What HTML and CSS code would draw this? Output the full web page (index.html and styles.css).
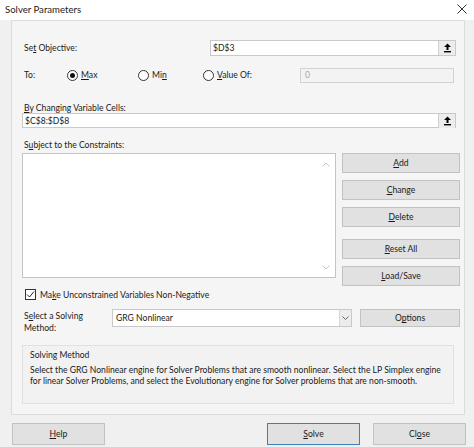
FILE: index.html
```html
<!DOCTYPE html>
<html lang="en">
<head>
    <meta charset="UTF-8">
    <meta name="viewport" content="width=device-width, initial-scale=1.0">
    <title>Solver Parameters</title>
    <link rel="stylesheet" href="styles.css">
</head>
<body>
    <div class="window">
        <div class="titlebar">
            <span class="title">Solver Parameters</span>
            <svg class="close" width="10" height="10" viewBox="0 0 10 10">
                <path d="M0.5 0.5 L9.5 9.5 M9.5 0.5 L0.5 9.5" stroke="#333" stroke-width="1" fill="none"/>
            </svg>
        </div>

        <div class="panel">
            <div class="row objective">
                <label class="lbl obj-lbl">Se<u>t</u> Objective:</label>
                <div class="refbox obj-box">
                    <span class="val">$D$3</span>
                    <span class="refbtn">
                        <svg width="9" height="10" viewBox="0 0 9 10">
                            <path d="M4.5 0.5 L8 4 L5.5 4 L5.5 7 L3.5 7 L3.5 4 L1 4 Z" fill="#000"/>
                            <rect x="1" y="8" width="7" height="1.4" fill="#000"/>
                        </svg>
                    </span>
                </div>
            </div>

            <div class="row to">
                <span class="lbl to-lbl">To:</span>
                <span class="radio-item r-max"><span class="radio checked"></span><span><u>M</u>ax</span></span>
                <span class="radio-item r-min"><span class="radio"></span><span>Mi<u>n</u></span></span>
                <span class="radio-item r-val"><span class="radio"></span><span><u>V</u>alue Of:</span></span>
                <div class="valbox">0</div>
            </div>

            <label class="lbl by-lbl"><u>B</u>y Changing Variable Cells:</label>
            <div class="refbox cells-box">
                <span class="val">$C$8:$D$8</span>
                <span class="refbtn">
                    <svg width="9" height="10" viewBox="0 0 9 10">
                        <path d="M4.5 0.5 L8 4 L5.5 4 L5.5 7 L3.5 7 L3.5 4 L1 4 Z" fill="#000"/>
                        <rect x="1" y="8" width="7" height="1.4" fill="#000"/>
                    </svg>
                </span>
            </div>

            <label class="lbl sub-lbl">S<u>u</u>bject to the Constraints:</label>
            <div class="row constraints">
                <div class="listbox">
                    <svg class="scroll-up" width="8" height="5" viewBox="0 0 8 5">
                        <path d="M0.5 4.5 L4 1 L7.5 4.5" stroke="#c4c4c4" fill="none"/>
                    </svg>
                    <svg class="scroll-down" width="8" height="5" viewBox="0 0 8 5">
                        <path d="M0.5 0.5 L4 4 L7.5 0.5" stroke="#c4c4c4" fill="none"/>
                    </svg>
                </div>
                <div class="side-buttons">
                    <button class="btn"><u>A</u>dd</button>
                    <button class="btn"><u>C</u>hange</button>
                    <button class="btn"><u>D</u>elete</button>
                    <button class="btn reset"><u>R</u>eset All</button>
                    <button class="btn"><u>L</u>oad/Save</button>
                </div>
            </div>

            <div class="row check-row">
                <span class="checkbox">
                    <svg width="9" height="9" viewBox="0 0 9 9">
                        <path d="M1 4.5 L3.5 7 L8 1.5" stroke="#222" stroke-width="1" fill="none"/>
                    </svg>
                </span>
                <span class="check-lbl">Ma<u>k</u>e Unconstrained Variables Non-Negative</span>
            </div>

            <div class="row method">
                <label class="lbl method-lbl">S<u>e</u>lect a Solving<br>Method:</label>
                <div class="select">
                    <span class="val">GRG Nonlinear</span>
                    <span class="select-arrow">
                        <svg width="7" height="4" viewBox="0 0 7 4">
                            <path d="M0.5 0.5 L3.5 3.5 L6.5 0.5" stroke="#666" fill="none"/>
                        </svg>
                    </span>
                </div>
                <button class="btn options">O<u>p</u>tions</button>
            </div>

            <div class="method-box">
                <div class="method-title">Solving Method</div>
                <p class="method-desc">Select the GRG Nonlinear engine for Solver Problems that are smooth nonlinear. Select the LP Simplex engine for linear Solver Problems, and select the Evolutionary engine for Solver problems that are non-smooth.</p>
            </div>
        </div>

        <div class="footer">
            <button class="btn foot-btn"><u>H</u>elp</button>
            <span class="spacer"></span>
            <button class="btn foot-btn solve"><u>S</u>olve</button>
            <button class="btn foot-btn">Cl<u>o</u>se</button>
        </div>
    </div>
</body>
</html>
```

FILE: styles.css
```css
* {
    box-sizing: border-box;
    margin: 0;
    padding: 0;
}

body {
    width: 474px;
    height: 447px;
    background-color: #f0f0f0;
    font-family: Lato, 'Noto Sans', sans-serif;
    font-size: 8.6px;
    color: #1a1a1a;
    overflow: hidden;
}

u {
    text-decoration: underline;
    text-underline-offset: 1px;
}

.titlebar {
    height: 20px;
    background: #ffffff;
    display: flex;
    align-items: center;
    justify-content: space-between;
    padding: 0 7px 2px 5px;
}

.title {
    font-size: 9.6px;
    color: #222;
}

.panel {
    margin: 0 9px 0 11px;
    height: 395px;
    border: 1px solid #dcdcdc;
    background: #f5f5f5;
    padding: 19px 4px 0 10px;
}

.row {
    display: flex;
    align-items: center;
}

.lbl {
    display: block;
    padding-left: 2px;
}

/* objective */
.objective {
    height: 16px;
}

.obj-lbl {
    width: 188px;
}

.refbox {
    display: flex;
    align-items: center;
    height: 16px;
    background: #fff;
    border: 1px solid #c9c9c9;
}

.refbox .val {
    flex: 1;
    padding-left: 2px;
}

.obj-box {
    width: 246px;
}

.refbtn {
    width: 17px;
    height: 14px;
    border-left: 1px solid #cfcfcf;
    background: #ececec;
    display: flex;
    align-items: center;
    justify-content: center;
}

/* to row */
.to {
    margin-top: 11px;
    height: 16px;
}

.to-lbl {
    width: 45px;
}

.radio-item {
    display: flex;
    align-items: center;
    gap: 3px;
}

.r-max { width: 71px; }
.r-min { width: 65px; }
.r-val { width: 97px; }

.radio {
    width: 11px;
    height: 11px;
    border: 1px solid #333;
    border-radius: 50%;
    background: #fff;
    display: flex;
    align-items: center;
    justify-content: center;
}

.radio.checked::after {
    content: "";
    width: 5px;
    height: 5px;
    border-radius: 50%;
    background: #111;
}

.valbox {
    width: 154px;
    height: 15px;
    border: 1px solid #d2d2d2;
    background: #f3f3f3;
    color: #a8a8a8;
    padding-left: 4px;
    line-height: 13px;
}

/* changing cells */
.by-lbl {
    margin-top: 20px;
    height: 10px;
    line-height: 10px;
}

.cells-box {
    width: 434px;
    height: 15px;
}

.sub-lbl {
    margin-top: 11px;
    height: 12px;
    line-height: 12px;
}

/* constraints */
.constraints {
    margin-top: 2px;
    align-items: flex-start;
    gap: 6px;
}

.listbox {
    position: relative;
    width: 314px;
    height: 125px;
    background: #fff;
    border: 1px solid #c4c4c4;
}

.scroll-up {
    position: absolute;
    right: 5px;
    top: 8px;
}

.scroll-down {
    position: absolute;
    right: 5px;
    bottom: 7px;
}

.side-buttons {
    display: flex;
    flex-direction: column;
    gap: 7px;
}

.btn {
    font-family: inherit;
    font-size: 8.6px;
    color: #1a1a1a;
    width: 118px;
    height: 20px;
    background: #e1e1e1;
    border: 1px solid #c2c2c2;
}

.side-buttons .reset {
    margin-top: 5px;
}

/* checkbox */
.check-row {
    margin-top: 3px;
    height: 11px;
    padding-left: 3px;
    gap: 4px;
}

.checkbox {
    width: 11px;
    height: 11px;
    border: 1px solid #333;
    background: #fff;
    display: flex;
    align-items: center;
    justify-content: center;
}

/* method */
.method {
    margin-top: 9px;
    align-items: flex-start;
}

.method-lbl {
    width: 90px;
    line-height: 12px;
    padding-top: 1px;
}

.select {
    width: 240px;
    height: 18px;
    background: #fff;
    border: 1px solid #c9c9c9;
    display: flex;
    align-items: center;
}

.select .val {
    flex: 1;
    padding-left: 3px;
}

.select-arrow {
    width: 12px;
    height: 16px;
    border-left: 1px solid #d6d6d6;
    background: #ececec;
    display: flex;
    align-items: center;
    justify-content: center;
}

.options {
    width: 100px;
    height: 18px;
    margin-left: 8px;
}

/* solving method box */
.method-box {
    margin-top: 11px;
    width: 432px;
    height: 59px;
    border: 1px solid #e0e0e0;
    background: #f2f2f2;
    padding: 3px 8px 0 7px;
}

.method-title {
    line-height: 12px;
}

.method-desc {
    margin-top: 4px;
    line-height: 11px;
}

/* footer */
.footer {
    display: flex;
    margin-top: 8px;
    padding: 0 8px 0 12px;
    gap: 13px;
}

.spacer {
    flex: 1;
}

.foot-btn {
    width: 93px;
    height: 22px;
}

.solve {
    border: 1px solid #3d7fb8;
}
```
